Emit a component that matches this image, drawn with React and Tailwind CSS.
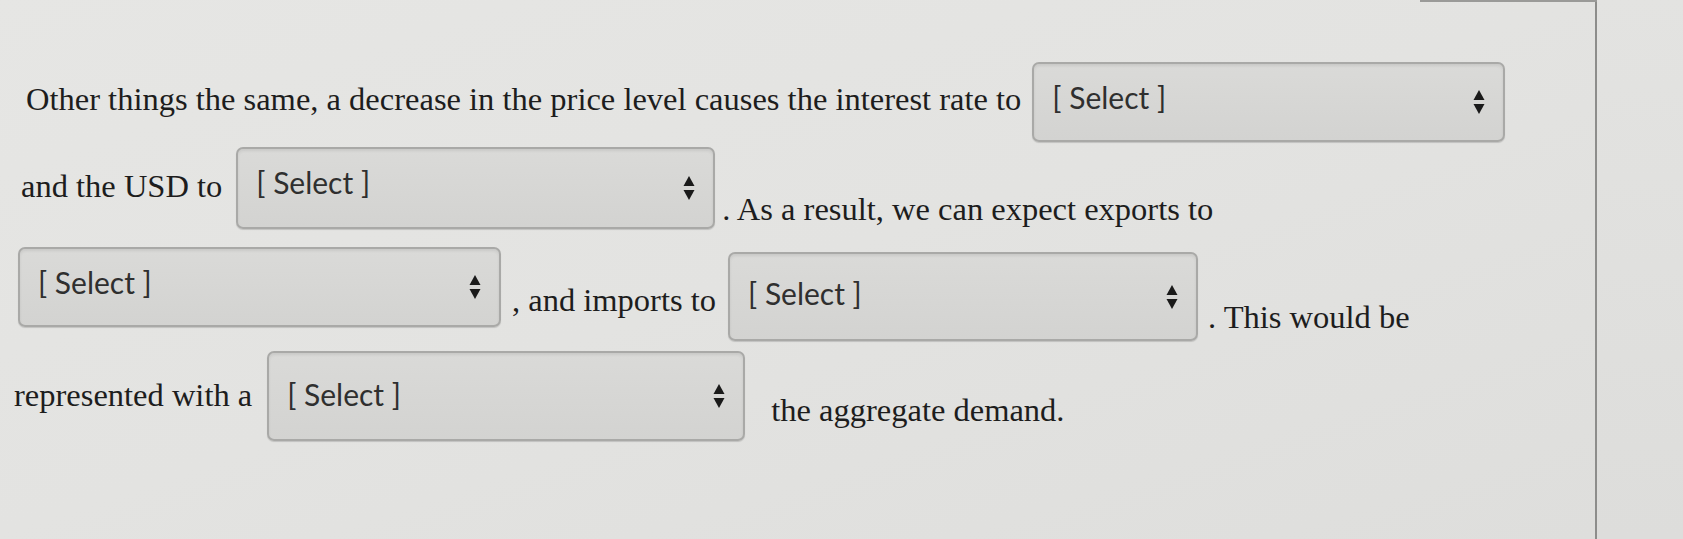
import React from 'react';

const Arrows = () => (
  <svg width="12" height="26" viewBox="0 0 12 26" className="shrink-0">
    <path d="M6 1 L11.5 11 L0.5 11 Z" fill="#1a1a1a" />
    <path d="M6 25 L11.5 15 L0.5 15 Z" fill="#1a1a1a" />
  </svg>
);

const Select = ({ className, textPad = 'pt-[16px]' }) => (
  <div
    className={`flex items-start justify-between shrink-0 rounded-[7px] border-2 border-[#a9a9a7] bg-gradient-to-b from-[#dadad8] to-[#d3d3d1] shadow-[inset_0_2px_3px_rgba(0,0,0,0.08),0_1px_1px_rgba(0,0,0,0.15)] pl-[18px] pr-[18px] ${className}`}
  >
    <span className={`${textPad} text-[30px] leading-[34px] text-[#2f2f2f] font-['Lato','Open_Sans',sans-serif]`}>
      [ Select ]
    </span>
    <div className="self-center">
      <Arrows />
    </div>
  </div>
);

const Txt = ({ children, className }) => (
  <span className={`shrink-0 whitespace-nowrap text-[32.5px] leading-[36px] text-[#1d1d1d] ${className}`}>
    {children}
  </span>
);

export default function App() {
  return (
    <div className="flex h-[539px] w-full overflow-hidden bg-[#dfdfdd] font-['Liberation_Serif','Times_New_Roman',serif]">
      <div className="flex w-[1597px] shrink-0 flex-col border-r-2 border-[#8d8d8b] bg-gradient-to-br from-[#e6e6e4] via-[#e3e3e1] to-[#dededc]">
        <div className="ml-[1420px] h-[2px] w-[177px] bg-[#9a9a98]" />

        {/* row 1 */}
        <div className="mt-[60px] flex items-start pl-[26px]">
          <Txt className="mt-[19px]">Other things the same, a decrease in the price level causes the interest rate to</Txt>
          <Select className="ml-[11px] h-[80px] w-[473px]" />
        </div>

        {/* row 2 */}
        <div className="mt-[5px] flex items-start pl-[21px]">
          <Txt className="mt-[21px]">and the USD to</Txt>
          <Select className="ml-[14px] h-[82px] w-[479px]" />
          <Txt className="ml-[7px] mt-[44px]">. As a result, we can expect exports to</Txt>
        </div>

        {/* row 3 */}
        <div className="mt-[18px] flex items-start pl-[18px]">
          <Select className="h-[80px] w-[483px]" />
          <Txt className="ml-[11px] mt-[35px]">, and imports to</Txt>
          <Select className="ml-[12px] mt-[5px] h-[89px] w-[470px]" textPad="pt-[22px]" />
          <Txt className="ml-[10px] mt-[52px]">. This would be</Txt>
        </div>

        {/* row 4 */}
        <div className="mt-[10px] flex items-start pl-[14px]">
          <Txt className="mt-[26px]">represented with a</Txt>
          <Select className="ml-[15px] h-[90px] w-[478px]" textPad="pt-[24px]" />
          <Txt className="ml-[26px] mt-[41px]">the aggregate demand.</Txt>
        </div>
      </div>
      <div className="flex-1 bg-gradient-to-b from-[#e3e3e1] to-[#dddddb]" />
    </div>
  );
}
